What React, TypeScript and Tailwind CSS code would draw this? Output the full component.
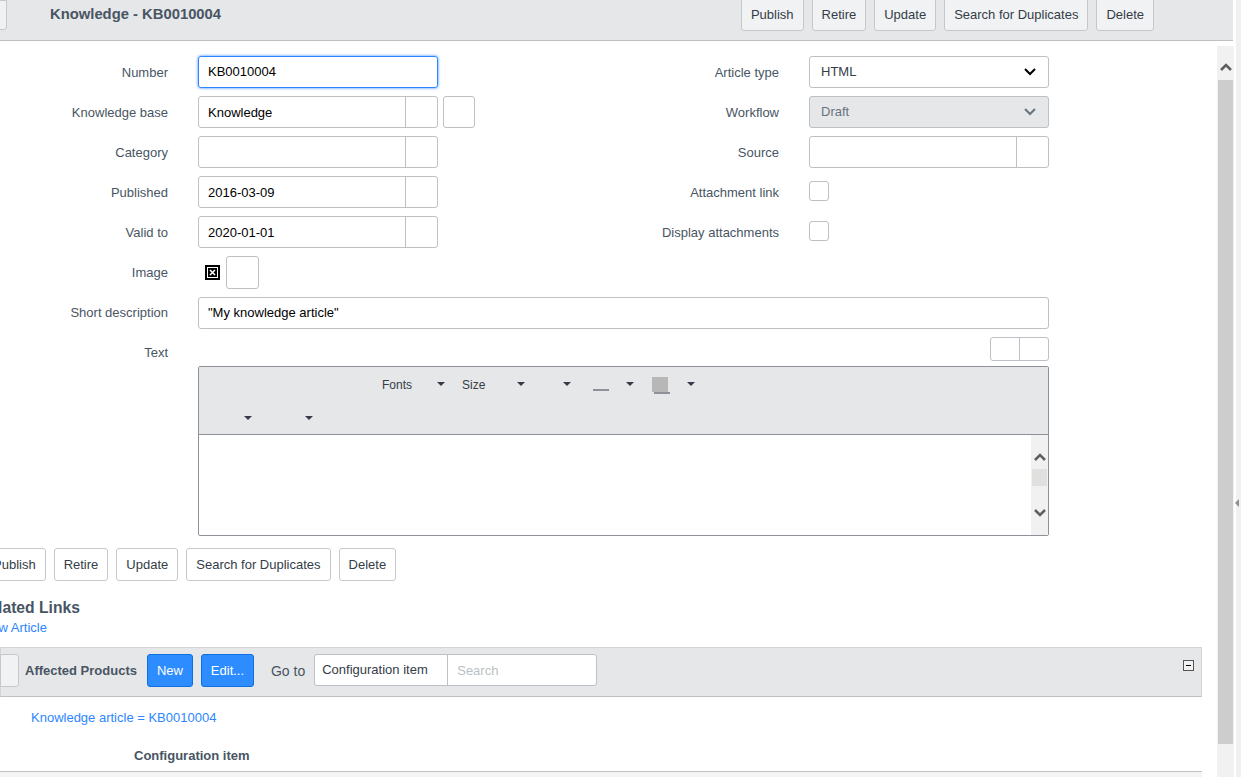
import React from "react";

const Btn = ({ children, className = "" }: { children: React.ReactNode; className?: string }) => (
  <button className={`px-[9px] rounded-[3px] border border-[#c6c9cc] text-[13px] text-[#343d47] ${className}`}>
    {children}
  </button>
);

const Label = ({ children, className = "leading-[34px]" }: { children: React.ReactNode; className?: string }) => (
  <div className={`h-8 text-[13px] text-[#485563] text-right ${className}`}>{children}</div>
);

const Addon = ({ value = "" }: { value?: string }) => (
  <div className="flex h-8 w-[240px] rounded-[3px] border border-[#bdc0c4] bg-white">
    <div className="flex-1 pl-[9px] text-[13px] leading-[32px] text-black">{value}</div>
    <div className="w-8 border-l border-[#bdc0c4]" />
  </div>
);

const Chevron = ({ color }: { color: string }) => (
  <svg width="12" height="8" viewBox="0 0 12 8" fill="none" stroke={color} strokeWidth="2">
    <path d="M1 1l5 5 5-5" />
  </svg>
);

const Select = ({ value, disabled }: { value: string; disabled?: boolean }) => (
  <div
    className={`flex items-center justify-between h-8 w-[240px] rounded-[3px] border border-[#bdc0c4] pl-[11px] pr-[12px] text-[13px] ${
      disabled ? "bg-[#e6e7e9] text-[#667380]" : "bg-white text-[#343d47]"
    }`}
  >
    <span>{value}</span>
    <Chevron color={disabled ? "#667380" : "#000"} />
  </div>
);

const Check = () => <div className="mt-[5px] w-5 h-5 rounded-[3px] border border-[#bdc0c4] bg-white" />;

const Caret = ({ className = "" }: { className?: string }) => (
  <span className={`w-0 h-0 border-x-[4px] border-x-transparent border-t-[4px] border-t-[#343d47] ${className}`} />
);

const Arrow = ({ d }: { d: string }) => (
  <svg width="12" height="8" viewBox="0 0 12 8" fill="none" stroke="#5f5f5f" strokeWidth="2.5">
    <path d={d} />
  </svg>
);

const actions = ["Publish", "Retire", "Update", "Search for Duplicates", "Delete"];

export default function App() {
  return (
    <div className="flex h-[777px] w-[1241px] overflow-hidden bg-white font-['Liberation_Sans',Arial,sans-serif]">
      <div className="w-[1234px] shrink-0">
        {/* top bar */}
        <div className="mr-px flex h-[41px] items-start bg-[#e6e7e9] border-b border-[#bdc0c4]">
          <div className="-ml-px h-[30px] w-2 rounded-br-[3px] border border-[#c6c9cc] bg-[#f1f1f1]" />
          <div className="ml-[43px] mt-[5px] text-[14.8px] font-bold leading-[18px] text-[#485563]">Knowledge - KB0010004</div>
          <div className="ml-auto -mt-[3px] mr-[79px] flex gap-2">
            {actions.map((t) => (
              <Btn key={t} className="h-[34px] pt-[2px] bg-[#f1f2f3]">{t}</Btn>
            ))}
          </div>
        </div>

        <div className="flex">
          <div className="w-[1217px] overflow-hidden">
            {/* form */}
            <div className="mt-[15px] grid grid-cols-[168px_440px_171px_1fr] gap-y-2">
              <Label>Number</Label>
              <div className="pl-[30px]">
                <div className="h-8 w-[240px] rounded-[3px] border border-[#2d86ff] shadow-[0_0_3px_#2d86ff] pl-[9px] text-[13px] leading-[30px] text-black">KB0010004</div>
              </div>
              <Label>Article type</Label>
              <div className="pl-[30px]"><Select value="HTML" /></div>

              <Label>Knowledge base</Label>
              <div className="flex gap-[5px] pl-[30px]">
                <Addon value="Knowledge" />
                <div className="h-8 w-8 rounded-[3px] border border-[#bdc0c4]" />
              </div>
              <Label>Workflow</Label>
              <div className="pl-[30px]"><Select value="Draft" disabled /></div>

              <Label>Category</Label>
              <div className="pl-[30px]"><Addon /></div>
              <Label>Source</Label>
              <div className="pl-[30px]"><Addon /></div>

              <Label>Published</Label>
              <div className="pl-[30px]"><Addon value="2016-03-09" /></div>
              <Label>Attachment link</Label>
              <div className="pl-[30px]"><Check /></div>

              <Label>Valid to</Label>
              <div className="pl-[30px]"><Addon value="2020-01-01" /></div>
              <Label>Display attachments</Label>
              <div className="pl-[30px]"><Check /></div>

              <Label>Image</Label>
              <div className="flex items-start pl-[30px]">
                <svg width="15" height="15" viewBox="0 0 15 15" className="ml-[7px] mt-[9px]">
                  <rect x="1" y="1" width="13" height="13" fill="#fff" stroke="#000" strokeWidth="2" />
                  <rect x="3" y="3" width="9" height="9" fill="#000" />
                  <path d="M5 5l5 5M10 5l-5 5" stroke="#fff" strokeWidth="1.5" />
                </svg>
                <div className="ml-[6px] h-[33px] w-[33px] rounded-[3px] border border-[#bdc0c4]" />
              </div>
              <div className="col-span-2" />

              <Label className="leading-[32px]">Short description</Label>
              <div className="col-span-3 pl-[30px]">
                <div className="h-8 w-[851px] rounded-[3px] border border-[#bdc0c4] pl-[9px] text-[13px] leading-[30px] text-black">"My knowledge article"</div>
              </div>
            </div>

            {/* text editor */}
            <div className="flex mt-2">
              <div className="w-[168px] text-right text-[13px] leading-[32px] text-[#485563]">Text</div>
              <div className="ml-[30px] w-[851px]">
                <div className="flex justify-end">
                  <div className="flex h-6 w-[59px] rounded-[3px] border border-[#bdc0c4]">
                    <div className="w-[29px] border-r border-[#bdc0c4]" />
                  </div>
                </div>
                <div className="mt-[5px] h-[170px] border border-[#8e9298] rounded-[2px] flex flex-col">
                  <div className="h-[68px] border-b border-[#8e9298] bg-[#e6e7e9] text-[12px] text-[#343d47]">
                    <div className="flex h-[34px] items-center">
                      <span className="ml-[183px] mt-[2px] w-[55px]">Fonts</span>
                      <Caret className="mr-[17px]" />
                      <span className="mt-[2px] w-[55px]">Size</span>
                      <Caret className="mr-[38px]" />
                      <Caret className="mr-[22px]" />
                      <span className="mt-[12px] h-[2px] w-4 bg-[#8e9298]" />
                      <Caret className="ml-[17px]" />
                      <div className="ml-[18px] mt-[2px] flex w-[18px] flex-col">
                        <span className="h-[15px] w-4 bg-[#b7b7b7]" />
                        <span className="ml-[2px] h-[2px] w-4 bg-[#8e9298]" />
                      </div>
                      <Caret className="ml-[17px]" />
                    </div>
                    <div className="flex h-[33px] items-center">
                      <Caret className="ml-[45px]" />
                      <Caret className="ml-[53px]" />
                    </div>
                  </div>
                  <div className="flex flex-1 justify-end">
                    <div className="flex w-[17px] flex-col items-center bg-[#f1f1f1] pt-[18px]">
                      <Arrow d="M1 7l5-5 5 5" />
                      <div className="mt-2 h-[17px] w-[15px] bg-[#e0e0de]" />
                      <div className="mt-[23px]">
                        <Arrow d="M1 1l5 5 5-5" />
                      </div>
                    </div>
                  </div>
                </div>
              </div>
            </div>

            {/* bottom buttons */}
            <div className="-ml-[17px] mt-3 flex gap-2">
              {actions.map((t) => (
                <Btn key={t} className="h-[33px]">{t}</Btn>
              ))}
            </div>

            <div className="-ml-[22px] mt-[17px] text-[15.7px] font-bold leading-[20px] text-[#485563]">Related Links</div>
            <div className="-ml-[20px] text-[13px] leading-[20px] text-[#2d86ff]">View Article</div>

            {/* related list */}
            <div className="mt-[9px] w-[1202px] flex h-[50px] items-start pt-[6px] border border-[#d2d4d7] border-b-[#bdc0c4] bg-[#e6e7e9]">
              <div className="-ml-px h-[33px] w-[19px] rounded-r-[3px] border border-[#c6c9cc] bg-[#f1f2f3]" />
              <span className="ml-[6px] text-[13px] font-bold leading-[33px] text-[#485563]">Affected Products</span>
              <button className="ml-[10px] h-[33px] w-[46px] rounded-[3px] border border-[#0f6fe0] bg-[#2d8cff] text-[13px] text-white">New</button>
              <button className="ml-2 h-[33px] w-[53px] rounded-[3px] border border-[#0f6fe0] bg-[#2d8cff] text-[13px] text-white">Edit...</button>
              <span className="ml-[17px] text-[14px] leading-[35px] text-[#485563]">Go to</span>
              <div className="ml-[9px] flex h-8 w-[283px] rounded-[3px] border border-[#bdc0c4] bg-white text-[13px]">
                <div className="w-[133px] border-r border-[#bdc0c4] pl-[7px] leading-[30px] text-[#343d47]">Configuration item</div>
                <div className="pl-[9px] leading-[32px] text-[#bbbfc4]">Search</div>
              </div>
              <div className="ml-auto mr-[7px] mt-[6px] flex h-[11px] w-[11px] items-center justify-center border border-[#555] bg-[#f1f1f1]">
                <span className="h-px w-[5px] bg-black" />
              </div>
            </div>
            <div className="ml-[31px] mt-[12px] text-[13px] leading-[18px] text-[#2d86ff]">Knowledge article = KB0010004</div>
            <div className="ml-[134px] mt-[20px] text-[13px] font-bold leading-[18px] text-[#485563]">Configuration item</div>
            <div className="mt-[6px] h-[20px] w-[1202px] border-t border-[#bdc0c4] bg-[#f4f4f4]" />
          </div>

          {/* page scrollbar */}
          <div className="mt-[5px] flex h-[731px] w-[17px] flex-col bg-[#f1f1f1]">
            <div className="flex h-[34px] items-center justify-center pt-[8px]">
              <Arrow d="M1 7l5-5 5 5" />
            </div>
            <div className="mx-px h-[664px] bg-[#cdcdcd]" />
          </div>
        </div>
      </div>
      {/* splitter */}
      <div className="relative flex-1 bg-[#f0f0f0] border-l-2 border-white">
        <span className="absolute left-[-1px] top-[499px] w-0 h-0 border-y-[4px] border-y-transparent border-r-[4px] border-r-[#8e8e8e]" />
      </div>
    </div>
  );
}
